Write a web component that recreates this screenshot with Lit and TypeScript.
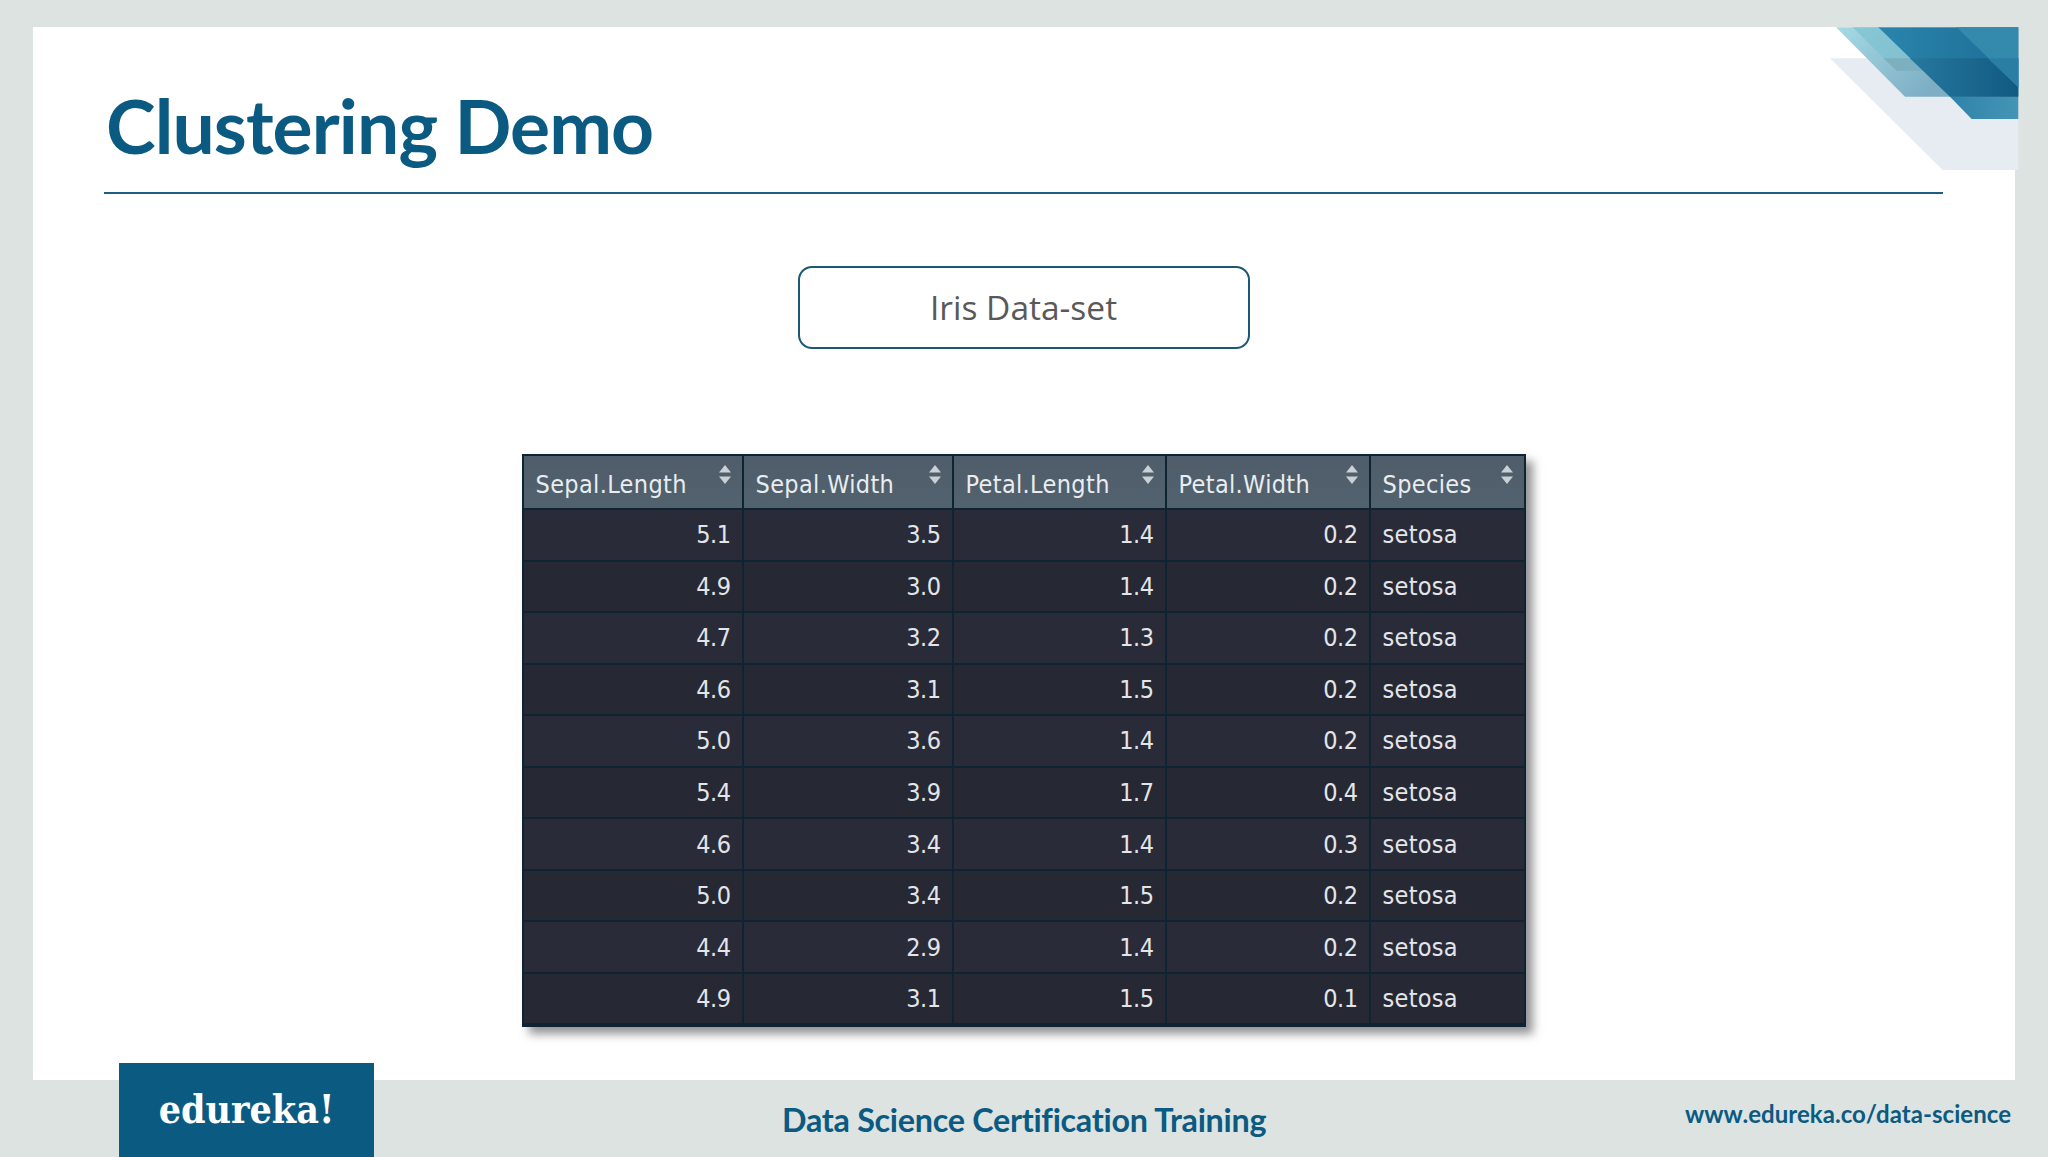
import { LitElement, html, css, svg } from "lit";
import { customElement } from "lit/decorators.js";

const COLS = ["Sepal.Length", "Sepal.Width", "Petal.Length", "Petal.Width", "Species"];
const ROWS = [
  ["5.1", "3.5", "1.4", "0.2"],
  ["4.9", "3.0", "1.4", "0.2"],
  ["4.7", "3.2", "1.3", "0.2"],
  ["4.6", "3.1", "1.5", "0.2"],
  ["5.0", "3.6", "1.4", "0.2"],
  ["5.4", "3.9", "1.7", "0.4"],
  ["4.6", "3.4", "1.4", "0.3"],
  ["5.0", "3.4", "1.5", "0.2"],
  ["4.4", "2.9", "1.4", "0.2"],
  ["4.9", "3.1", "1.5", "0.1"],
];

const corner = svg`
  <defs>
    <linearGradient id="cy" x1="0" y1="0" x2="1" y2="0.6">
      <stop offset="0" stop-color="#a6dae4"/><stop offset="1" stop-color="#7daec4"/>
    </linearGradient>
    <linearGradient id="bl" x1="0" y1="0" x2="1" y2="0">
      <stop offset="0" stop-color="#2a85ab"/><stop offset="1" stop-color="#1d6d97"/>
    </linearGradient>
    <linearGradient id="dk" x1="0" y1="0" x2="1" y2="0">
      <stop offset="0" stop-color="#26789f"/><stop offset="1" stop-color="#115a82"/>
    </linearGradient>
    <linearGradient id="lo" x1="0" y1="0" x2="1" y2="0">
      <stop offset="0" stop-color="#2f83a9"/><stop offset="1" stop-color="#4594b5"/>
    </linearGradient>
  </defs>
  <polygon points="210,175 775,175 775,510 548,510" fill="#e7ebf2"/>
  <polygon points="228,82 360,82 570,290 435,290" fill="url(#cy)"/>
  <polygon points="278,82 360,82 490,212 410,212" fill="#7fc2d0" opacity="0.75"/>
  <polygon points="370,175 470,175 507,212 410,212" fill="#7aabba" opacity="0.8"/>
  <polygon points="355,82 775,82 775,290 570,290" fill="url(#bl)"/>
  <polygon points="570,290 775,290 775,357 635,357" fill="url(#lo)"/>
  <polygon points="450,175 775,175 775,290 570,290" fill="url(#dk)"/>
  <polygon points="590,82 775,82 775,262" fill="#348aad"/>
  <polygon points="683,175 775,175 775,262" fill="#2a7da3"/>
`;

@customElement("sort-mark")
class SortMark extends LitElement {
  static styles = css`
    :host { display: block; flex: none; width: 12px; height: 19px; }
    svg { display: block; }
  `;
  render() {
    return html`<svg width="12" height="19" viewBox="0 0 12 19">
      <path d="M6 0 L12 7.5 H0 Z" fill="#c9d0d6"/>
      <path d="M0 11.5 H12 L6 19 Z" fill="#c9d0d6"/>
    </svg>`;
  }
}

@customElement("app-root")
export class AppRoot extends LitElement {
  static styles = css`
    :host { display: block; width: 2048px; height: 1157px; overflow: hidden; }
    .page {
      position: relative; width: 2048px; height: 1157px; background: #dde3e1;
      display: flex; flex-direction: column; padding-top: 27px; box-sizing: border-box;
    }
    .slide {
      margin: 0 33px; height: 1053px; background: #fff; flex: none;
      padding: 0 72px 0 71px; box-sizing: border-box;
      display: flex; flex-direction: column; align-items: stretch;
    }
    .corner { position: absolute; top: 0; right: 0; width: 288px; height: 200px; }
    .title {
      height: 167px; box-sizing: border-box; margin: 0; padding: 58px 0 0 2px;
      border-bottom: 2px solid #1d5f80; color: #0a5a82;
      font: 700 75px/80px "Lato", "Carlito", sans-serif; letter-spacing: -0.9px;
    }
    .label {
      align-self: center; margin-top: 72px; width: 452px; height: 83px; box-sizing: border-box;
      border: 2px solid #1b5878; border-radius: 14px; background: #fff;
      display: flex; align-items: center; justify-content: center;
      color: #595959; font: 400 33.5px/1 "Open Sans", sans-serif;
    }
    .table {
      align-self: center; margin-top: 105px; width: 1004px; box-sizing: border-box;
      border: 2px solid #0f2433; background: #0f2433;
      box-shadow: 7px 7px 9px rgba(60, 60, 66, 0.55);
      display: grid; grid-template-columns: 220px 210px 213px 204px 1fr;
      grid-template-rows: 54px; grid-auto-rows: 51.55px;
      font: 400 25px/1 "DejaVu Sans Condensed", "DejaVu Sans", sans-serif;
    }
    .head {
      background: linear-gradient(#4e5d69, #52626e);
      border-right: 2px solid #0f2433; border-bottom: 2px solid #0f2433; box-sizing: border-box;
      padding: 9px 11px 0 12px; display: flex; justify-content: space-between; align-items: flex-start;
      color: #e9edf0;
    }
    .head span { padding-top: 7px; letter-spacing: 0.35px; }
    .cell {
      background: #2a2b39; color: #e3e5e8; box-sizing: border-box;
      border-right: 2px solid #0f2433; border-bottom: 2px solid #0f2433;
      display: flex; align-items: center; justify-content: flex-end; padding: 0 11px 0 12px;
      letter-spacing: -0.5px;
    }
    .cell.even { background: #262834; }
    .last { border-right: none; }
    .text { justify-content: flex-start; letter-spacing: 0.3px; }
    .footer {
      flex: 1; margin-top: -17px; position: relative;
      display: grid; grid-template-columns: 255px 1fr auto; padding: 0 37px 0 119px; align-items: stretch;
    }
    .logo {
      background: #0a5a82; color: #fff; display: flex; justify-content: center; padding-top: 27px;
      font: 700 39px/1 "DejaVu Serif Condensed", "DejaVu Serif", serif; box-sizing: border-box;
    }
    .course {
      align-self: end; padding: 0 0 21px 0; margin-left: 408px; color: #0a5a82;
      font: 700 32.3px/1 "Lato", sans-serif; white-space: nowrap; letter-spacing: -0.28px;
    }
    .site {
      align-self: end; padding-bottom: 31px; color: #0a5a82;
      font: 700 24px/1 "Lato", sans-serif; white-space: nowrap; letter-spacing: 0.05px;
    }
  `;

  render() {
    return html`<div class="page">
      <div class="slide">
        <h1 class="title">Clustering Demo</h1>
        <div class="label">Iris Data-set</div>
        <div class="table">
          ${COLS.map((c, i) => html`<div class="head ${i === 4 ? "last" : ""}"><span>${c}</span><sort-mark></sort-mark></div>`)}
          ${ROWS.map((r, ri) => html`
            ${r.map((v) => html`<div class="cell ${ri % 2 ? "even" : ""}">${v}</div>`)}
            <div class="cell text last ${ri % 2 ? "even" : ""}">setosa</div>
          `)}
        </div>
      </div>
      <svg class="corner" viewBox="0 0 864 600">${corner}</svg>
      <div class="footer">
        <div class="logo">edureka!</div>
        <div class="course">Data Science Certification Training</div>
        <div class="site">www.edureka.co/data-science</div>
      </div>
    </div>`;
  }
}
